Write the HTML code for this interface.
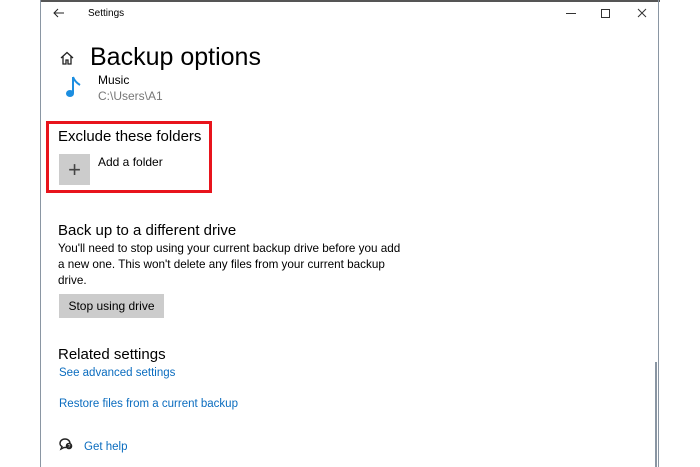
<!DOCTYPE html><html><head><style>
body{margin:0;width:700px;height:467px;background:#fff;position:relative;overflow:hidden;font-family:"Liberation Sans",sans-serif;color:#000}
.a{position:absolute;white-space:nowrap}
.l{color:#0a6cbf;font-size:11.5px}
</style></head><body>
<div class="a" style="left:40px;top:0;width:620px;height:2px;background:#555"></div>
<div class="a" style="left:40px;top:0;width:1px;height:467px;background:#8a96a3"></div>
<div class="a" style="left:658px;top:0;width:1px;height:467px;background:#8a96a3"></div>
<div class="a" style="left:655px;top:362px;width:2px;height:105px;background:#8a96a3"></div>
<svg class="a" style="left:53px;top:8px" width="12" height="10" viewBox="0 0 12 10"><path d="M11 5H1M5 1L1 5L5 9" fill="none" stroke="#222" stroke-width="1"/></svg>
<div class="a" style="left:88px;top:8px;font-size:10px">Settings</div>
<div class="a" style="left:566px;top:13px;width:10px;height:1px;background:#333"></div>
<div class="a" style="left:601px;top:9px;width:7px;height:7px;border:1px solid #333"></div>
<svg class="a" style="left:637px;top:8px" width="10" height="10" viewBox="0 0 10 10"><path d="M1 1L9 9M9 1L1 9" stroke="#333" stroke-width="1"/></svg>
<svg class="a" style="left:59px;top:50px" width="16" height="16" viewBox="0 0 16 16"><path d="M2 8L8 2.5L14 8M4 6.5V14H7V10H9V14H12V6.5" fill="none" stroke="#222" stroke-width="1.3"/></svg>
<div class="a" style="left:90px;top:43px;font-size:25px">Backup options</div>
<svg class="a" style="left:65px;top:75px" width="16" height="24" viewBox="0 0 16 24"><path d="M8 2V18" stroke="#1c8ee0" stroke-width="2"/><path d="M8 2Q10 7 15 10" stroke="#1c8ee0" stroke-width="2" fill="none"/><ellipse cx="5" cy="18.5" rx="4" ry="3.5" fill="#1c8ee0"/></svg>
<div class="a" style="left:98px;top:73px;font-size:12px">Music</div>
<div class="a" style="left:98px;top:89px;font-size:12px;color:#777">C:\Users\A1</div>
<div class="a" style="left:46px;top:121px;width:160px;height:66px;border:3px solid #e8141c"></div>
<div class="a" style="left:58px;top:128px;font-size:15px">Exclude these folders</div>
<div class="a" style="left:59px;top:154px;width:31px;height:31px;background:#ccc;color:#444;font-size:22px;text-align:center;line-height:31px">+</div>
<div class="a" style="left:98px;top:155px;font-size:12px">Add a folder</div>
<div class="a" style="left:58px;top:222px;font-size:15px">Back up to a different drive</div>
<div class="a" style="left:58px;top:241px;font-size:11.7px;line-height:16px">You'll need to stop using your current backup drive before you add<br>a new one. This won't delete any files from your current backup<br>drive.</div>
<div class="a" style="left:59px;top:294px;width:105px;height:24px;background:#ccc;font-size:12px;text-align:center;line-height:24px">Stop using drive</div>
<div class="a" style="left:58px;top:346px;font-size:15px">Related settings</div>
<div class="a l" style="left:59px;top:367px">See advanced settings</div>
<div class="a l" style="left:59px;top:398px">Restore files from a current backup</div>
<svg class="a" style="left:59px;top:438px" width="14" height="13" viewBox="0 0 14 13"><path d="M6 1C3 1 1 3 1 5.5C1 7 2 8 3 8.5L2 11L5 9.5C8 10 11 8 11 5.5C11 3 9 1 6 1Z" fill="none" stroke="#222" stroke-width="1.4"/><circle cx="10" cy="8" r="3.3" fill="#222"/><text x="10" y="10" font-size="5" fill="#fff" text-anchor="middle" font-family="Liberation Sans">?</text></svg>
<div class="a l" style="left:84px;top:441px">Get help</div>
</body></html>
